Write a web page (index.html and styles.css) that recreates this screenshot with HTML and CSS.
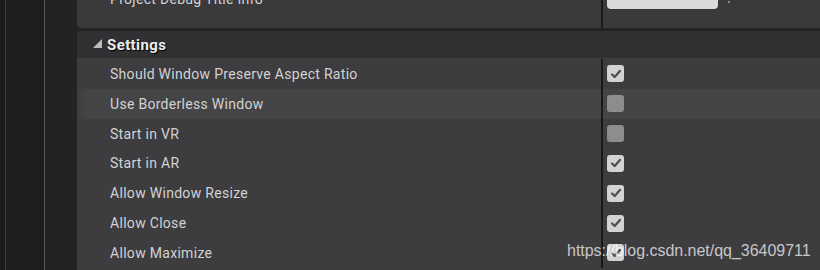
FILE: index.html
```
<!DOCTYPE html>
<html>
<head>
<meta charset="utf-8">
<link rel="stylesheet" href="styles.css">
</head>
<body>
<div class="gutter">
  <div class="g1"></div>
  <div class="g2"></div>
  <div class="g3"></div>
</div>
<div class="main">
  <div class="toprow">
    <div class="name top-name">Project Debug Title Info</div>
    <div class="value"><div class="field"></div><span class="dot"></span></div>
  </div>
  <div class="sep"></div>
  <div class="header"><span class="tri"></span><span class="htext">Settings</span></div>
  <div class="rows">
    <div class="row"><div class="name">Should Window Preserve Aspect Ratio</div><div class="value"><span class="cb on"><svg viewBox="0 0 16 16"><path d="M3.5 8.5 L6.5 11.5 L12.5 4.5" /></svg></span></div></div>
    <div class="row hover"><div class="name">Use Borderless Window</div><div class="value"><span class="cb off"></span></div></div>
    <div class="row"><div class="name">Start in VR</div><div class="value"><span class="cb off"></span></div></div>
    <div class="row"><div class="name">Start in AR</div><div class="value"><span class="cb on"><svg viewBox="0 0 16 16"><path d="M3.5 8.5 L6.5 11.5 L12.5 4.5" /></svg></span></div></div>
    <div class="row"><div class="name">Allow Window Resize</div><div class="value"><span class="cb on"><svg viewBox="0 0 16 16"><path d="M3.5 8.5 L6.5 11.5 L12.5 4.5" /></svg></span></div></div>
    <div class="row"><div class="name">Allow Close</div><div class="value"><span class="cb on"><svg viewBox="0 0 16 16"><path d="M3.5 8.5 L6.5 11.5 L12.5 4.5" /></svg></span></div></div>
    <div class="row"><div class="name">Allow Maximize</div><div class="value"><span class="cb on"><svg viewBox="0 0 16 16"><path d="M3.5 8.5 L6.5 11.5 L12.5 4.5" /></svg></span></div></div>
  </div>
</div>
<div class="watermark">https://blog.csdn.net/qq_36409711</div>
</body>
</html>
```
FILE: styles.css
```
html, body {
  margin: 0;
  padding: 0;
}
body {
  width: 820px;
  height: 270px;
  overflow: hidden;
  display: flex;
  background: #232323;
  font-family: Roboto, "Liberation Sans", sans-serif;
  position: relative;
}
.gutter {
  display: flex;
  width: 77px;
  flex: none;
}
.g1 {
  width: 5px;
  background: #1c1c1c;
  border-right: 1px solid #3c3c3c;
}
.g2 {
  width: 38px;
  background: #1e1e1e;
  border-right: 1px solid #555555;
}
.g3 {
  width: 32px;
  background: #232323;
}
.main {
  flex: 1;
  display: flex;
  flex-direction: column;
}
.toprow {
  height: 28px;
  display: flex;
  background: #3a393c;
  border-bottom-left-radius: 4px;
  overflow: hidden;
}
.name {
  width: 491px;
  padding-left: 33px;
  flex: none;
  font-size: 14px;
  color: #d2d2d2;
  letter-spacing: 0.3px;
  display: flex;
  align-items: center;
}
.top-name {
  align-items: flex-start;
  margin-top: -9px;
}
.value {
  flex: 1;
  border-left: 2px solid #19191a;
  display: flex;
  align-items: center;
  padding-left: 4px;
}
.toprow .value {
  align-items: flex-start;
}
.field {
  width: 111px;
  height: 9px;
  background: #dadadc;
  border-radius: 0 0 4px 4px;
}
.dot {
  width: 2px;
  height: 2px;
  background: #8a8a8c;
  margin-left: 10px;
  margin-top: 1px;
}
.sep {
  height: 3px;
  background: #232325;
}
.header {
  height: 27px;
  background: #313033;
  border-top-left-radius: 4px;
  display: flex;
  align-items: center;
  padding-left: 16px;
}
.tri {
  width: 0;
  height: 0;
  border-left: 9px solid transparent;
  border-bottom: 9px solid #bdbdbd;
  margin-right: 5px;
  margin-top: -2px;
}
.htext {
  font-size: 15px;
  font-weight: bold;
  color: #ececec;
  letter-spacing: 0.4px;
  text-shadow: 1px 1px 1px #000;
}
.rows {
  flex: 1;
  background: #3d3c3f;
  padding-top: 1px;
}
.row {
  height: 29.85px;
  display: flex;
}
.row.hover {
  background: linear-gradient(to right, #3d3c3f 0px, #454447 12px, #454447 100%);
}
.cb {
  width: 17px;
  height: 17px;
  border-radius: 3px;
  display: flex;
  align-items: center;
  justify-content: center;
}
.cb.on {
  background: #d3d3d5;
}
.cb.off {
  background: #8d8d8f;
}
.cb svg {
  width: 14px;
  height: 14px;
}
.cb path {
  fill: none;
  stroke: #4f4f52;
  stroke-width: 2.6;
  stroke-linecap: round;
  stroke-linejoin: round;
}
.watermark {
  position: absolute;
  left: 567px;
  top: 242px;
  font-family: "Liberation Sans", Arial, sans-serif;
  font-size: 16px;
  color: rgba(255, 255, 255, 0.72);
  letter-spacing: -0.02px;
}
```
